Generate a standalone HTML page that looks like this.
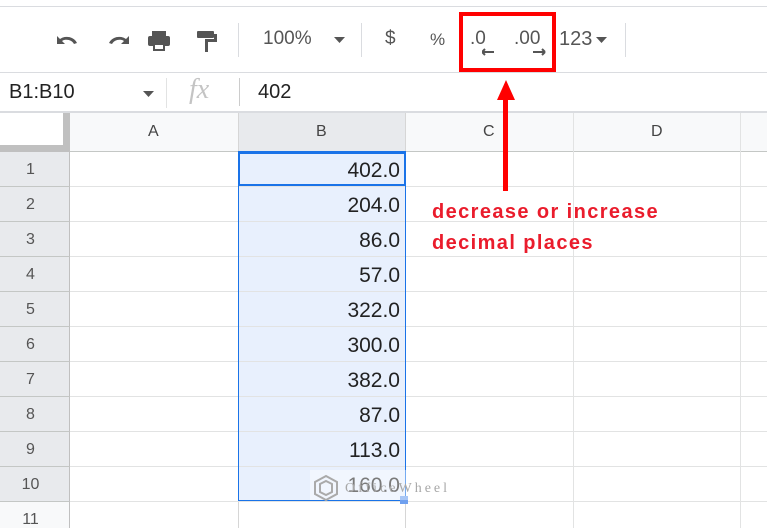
<!DOCTYPE html>
<html><head><meta charset="utf-8"><style>
*{margin:0;padding:0;box-sizing:border-box}
html,body{width:767px;height:528px;overflow:hidden}
body{background:#fff;font-family:"Liberation Sans",Arial,sans-serif;position:relative}
.a{position:absolute}
.tb{color:#555;font-size:19px}
.vl{position:absolute;width:1px;background:#e2e3e3}
.hl{position:absolute;height:1px;background:#e2e3e3}
.rh{position:absolute;left:0;width:70px;height:35px;background:#e8eaed;border-right:1px solid #c0c0c0;border-bottom:1px solid #c4c7c5;color:#555;font-size:16px;text-align:center;line-height:35px;padding-right:8px}
.num{position:absolute;left:238px;width:162px;text-align:right;font-size:21px;color:#222;height:35px;line-height:37px}
</style></head><body>
<div class="hl" style="top:6px;left:0;width:767px;background:#dadce0"></div>
<svg class="a" style="left:52px;top:28px" width="170" height="26" viewBox="0 0 170 26">
<path d="M5 8 v8 h8 l-3 -3 a8 7 0 0 1 12 3 l3-1 a11 10 0 0 0-17-4z" fill="#555"/>
<path d="M77 8 v8 h-8 l3 -3 a8 7 0 0 0 -12 3 l-3-1 a11 10 0 0 1 17-4z" fill="#555"/>
<rect x="100" y="3" width="14" height="5" fill="#555"/>
<rect x="96" y="8" width="22" height="10" rx="2" fill="#555"/>
<rect x="101" y="15" width="12" height="8" fill="#555"/><rect x="103" y="17" width="8" height="4" fill="#fff"/>
<rect x="145" y="3" width="17" height="7" rx="1" fill="#555"/>
<path d="M162 6 h3 v8 h-9 v10 h-3 v-13 h9z" fill="#555"/>
</svg>
<div class="vl" style="left:238px;top:23px;height:34px;background:#dadce0"></div>
<div class="a tb" style="left:263px;top:28px">100%</div>
<svg class="a" style="left:334px;top:37px" width="12" height="8"><path d="M0 0h11l-5.5 6z" fill="#555"/></svg>
<div class="vl" style="left:361px;top:23px;height:34px;background:#dadce0"></div>
<div class="a tb" style="left:385px;top:28px">$</div>
<div class="a" style="left:430px;top:30px;font-size:17px;color:#555">%</div>
<div class="a tb" style="left:470px;top:28px">.0</div>
<svg class="a" style="left:482px;top:48px" width="14" height="8"><path d="M0 4h12M0 4l3-3M0 4l3 3" stroke="#555" stroke-width="2" fill="none"/></svg>
<div class="a tb" style="left:514px;top:28px">.00</div>
<svg class="a" style="left:533px;top:48px" width="14" height="8"><path d="M0 4h12M12 4l-3-3M12 4l-3 3" stroke="#555" stroke-width="2" fill="none"/></svg>
<div class="a" style="left:559px;top:28px;font-size:20px;color:#555">123</div>
<svg class="a" style="left:596px;top:37px" width="12" height="8"><path d="M0 0h11l-5.5 6z" fill="#555"/></svg>
<div class="vl" style="left:625px;top:23px;height:34px;background:#dadce0"></div>
<div class="a" style="left:459px;top:12px;width:97px;height:60px;border:4px solid #f00"></div>
<div class="hl" style="top:72px;left:0;width:767px;background:#dadce0"></div>
<div class="a" style="left:9px;top:81px;font-size:20px;color:#222">B1:B10</div>
<svg class="a" style="left:143px;top:91px" width="12" height="8"><path d="M0 0h11l-5.5 6z" fill="#555"/></svg>
<div class="vl" style="left:166px;top:78px;height:30px"></div>
<div class="a" style="left:189px;top:74px;font-size:28px;color:#c4c4c4;font-family:'Liberation Serif',serif;font-style:italic">fx</div>
<div class="vl" style="left:239px;top:78px;height:28px;background:#ccc"></div>
<div class="a" style="left:258px;top:81px;font-size:20px;color:#222">402</div>
<div class="hl" style="top:111px;left:0;width:767px;height:2px;background:#dadce0"></div>
<div class="a" style="left:0;top:113px;width:767px;height:39px;background:#f8f9fa;border-bottom:1px solid #c4c7c5"></div>
<div class="a" style="left:238px;top:113px;width:167px;height:39px;background:#e8eaed"></div>
<div class="a" style="left:0;top:113px;width:64px;height:32px;background:#fff"></div>
<div class="a" style="left:63px;top:113px;width:7px;height:39px;background:#c0c0c0"></div>
<div class="a" style="left:0;top:145px;width:70px;height:7px;background:#c0c0c0"></div>
<div class="a" style="left:148px;top:123px;font-size:16px;color:#444">A</div>
<div class="a" style="left:316px;top:123px;font-size:16px;color:#444">B</div>
<div class="a" style="left:483px;top:123px;font-size:16px;color:#444">C</div>
<div class="a" style="left:651px;top:123px;font-size:16px;color:#444">D</div>
<div class="vl" style="left:238px;top:113px;height:415px;background:#d6d6d6"></div>
<div class="vl" style="left:405px;top:113px;height:415px;background:#d6d6d6"></div>
<div class="vl" style="left:573px;top:113px;height:415px"></div>
<div class="vl" style="left:740px;top:113px;height:415px"></div>
<div class="a" style="left:238px;top:151px;width:168px;height:350px;background:#e8f0fd"></div>
<div class="hl" style="top:186px;left:70px;width:697px"></div>
<div class="hl" style="top:221px;left:70px;width:697px"></div>
<div class="hl" style="top:256px;left:70px;width:697px"></div>
<div class="hl" style="top:291px;left:70px;width:697px"></div>
<div class="hl" style="top:326px;left:70px;width:697px"></div>
<div class="hl" style="top:361px;left:70px;width:697px"></div>
<div class="hl" style="top:396px;left:70px;width:697px"></div>
<div class="hl" style="top:431px;left:70px;width:697px"></div>
<div class="hl" style="top:466px;left:70px;width:697px"></div>
<div class="hl" style="top:501px;left:70px;width:697px"></div>
<div class="rh" style="top:152px">1</div>
<div class="rh" style="top:187px">2</div>
<div class="rh" style="top:222px">3</div>
<div class="rh" style="top:257px">4</div>
<div class="rh" style="top:292px">5</div>
<div class="rh" style="top:327px">6</div>
<div class="rh" style="top:362px">7</div>
<div class="rh" style="top:397px">8</div>
<div class="rh" style="top:432px">9</div>
<div class="rh" style="top:467px">10</div>
<div class="rh" style="top:502px;background:#f8f9fa">11</div>
<div class="num" style="top:152px">402.0</div>
<div class="num" style="top:187px">204.0</div>
<div class="num" style="top:222px">86.0</div>
<div class="num" style="top:257px">57.0</div>
<div class="num" style="top:292px">322.0</div>
<div class="num" style="top:327px">300.0</div>
<div class="num" style="top:362px">382.0</div>
<div class="num" style="top:397px">87.0</div>
<div class="num" style="top:432px">113.0</div>
<div class="num" style="top:467px">160.0</div>
<div class="a" style="left:238px;top:151px;width:168px;height:350px;border:1px solid #1a73e8"></div>
<div class="a" style="left:238px;top:152px;width:168px;height:34px;border:2px solid #1a73e8"></div>
<div class="a" style="left:400px;top:496px;width:8px;height:8px;background:#6fa0ef"></div>
<div class="a" style="left:310px;top:470px;width:150px;height:30px;background:rgba(255,255,255,0.4)"></div>
<div class="a" style="left:345px;top:481px;font-size:14px;color:#a8a8a8;letter-spacing:3px;font-family:'Liberation Serif',serif">OfficeWheel</div>
<svg class="a" style="left:313px;top:474px" width="26" height="28"><path d="M13 2 L24 8 V20 L13 26 L2 20 V8Z M13 7 L19 10 V18 L13 21 L7 18 V10Z" fill="none" stroke="#aaa" stroke-width="2"/></svg>
<div class="a" style="left:503px;top:96px;width:5px;height:95px;background:#f00"></div>
<svg class="a" style="left:496px;top:80px" width="20" height="20"><path d="M10 0 L19 20 H1Z" fill="#f00"/></svg>
<div class="a" style="left:432px;top:197px;font-size:20px;font-weight:bold;color:#ea1c2c;letter-spacing:1.4px;line-height:31px">decrease or increase<br>decimal places</div>
</body></html>
